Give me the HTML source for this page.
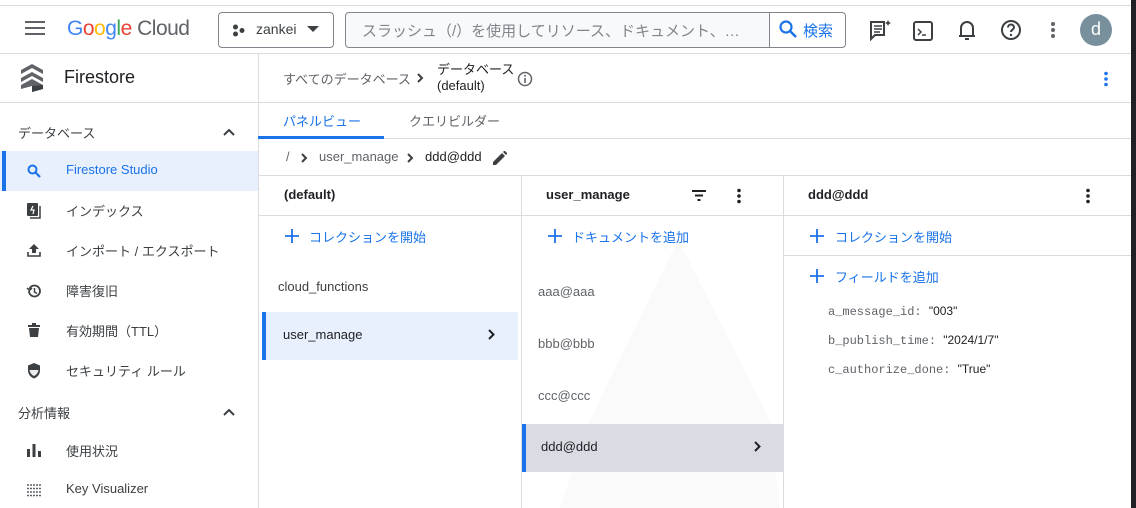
<!DOCTYPE html><html><head><meta charset="utf-8"><style>
*{box-sizing:border-box;margin:0;padding:0}
body{width:1136px;height:508px;overflow:hidden;background:#fff;font-family:"Liberation Sans","Noto Sans CJK JP",sans-serif;color:#202124;position:relative;font-size:13px}
.a{position:absolute;white-space:nowrap}
.h{background:#dadce0}
.g{color:#5f6368}
.b{color:#1a73e8}
svg{position:absolute}
</style></head><body>
<div class="a h" style="left:0;top:5px;width:1136px;height:1px"></div>
<div class="a h" style="left:0;top:53px;width:1136px;height:1px"></div>
<svg style="left:25px;top:21px" width="20" height="14"><path d="M0 1h20M0 7h20M0 13h20" stroke="#5f6368" stroke-width="2"/></svg>
<div class="a" style="left:67px;top:17px;font-size:21px;letter-spacing:-0.5px"><span style="color:#4285f4">G</span><span style="color:#ea4335">o</span><span style="color:#fbbc04">o</span><span style="color:#4285f4">g</span><span style="color:#34a853">l</span><span style="color:#ea4335">e</span> <span style="color:#5f6368">Cloud</span></div>
<div class="a" style="left:218px;top:12px;width:116px;height:36px;border:1px solid #80868b;border-radius:4px"></div>
<svg style="left:232px;top:24px" width="14" height="13"><circle cx="3.5" cy="3" r="2.5" fill="#3c4043"/><circle cx="3.5" cy="10" r="2.5" fill="#3c4043"/><circle cx="10" cy="6.5" r="2.5" fill="#3c4043"/></svg>
<div class="a" style="left:256px;top:21px;font-size:14px;color:#3c4043">zankei</div>
<svg style="left:307px;top:26px" width="12" height="7"><path d="M0 0h12L6 6z" fill="#3c4043"/></svg>
<div class="a" style="left:345px;top:12px;width:501px;height:36px;border:1px solid #80868b;border-radius:4px;background:#f8f9fa"></div>
<div class="a" style="left:769px;top:13px;width:76px;height:34px;background:#fff;border-left:1px solid #80868b;border-radius:0 4px 4px 0"></div>
<div class="a" style="left:362px;top:20px;font-size:15px;color:#80868b">スラッシュ（/）を使用してリソース、ドキュメント、…</div>
<svg style="left:779px;top:20px" width="18" height="18"><circle cx="7" cy="7" r="5.5" fill="none" stroke="#1a73e8" stroke-width="2.2"/><path d="M11 11l6 6" stroke="#1a73e8" stroke-width="2.5"/></svg>
<div class="a b" style="left:803px;top:20px;font-size:15px">検索</div>
<svg style="left:868px;top:18px" width="24" height="24"><path d="M3 4h13v13H7l-4 4z" fill="none" stroke="#3c4043" stroke-width="2"/><path d="M6 8h8M6 11h8M6 14h6" stroke="#3c4043" stroke-width="1.6"/><path d="M20 2l1 2 2 1-2 1-1 2-1-2-2-1 2-1z" fill="#3c4043"/></svg>
<svg style="left:913px;top:21px" width="20" height="20"><rect x="1" y="1" width="18" height="18" rx="2" fill="none" stroke="#3c4043" stroke-width="2"/><path d="M5 8l3 3-3 3M9 14h4" stroke="#3c4043" stroke-width="1.5" fill="none"/></svg>
<svg style="left:957px;top:18px" width="20" height="24"><path d="M4 18V10a6 6 0 0112 0v8M2 18h16" fill="none" stroke="#3c4043" stroke-width="2"/><path d="M8 21h4" stroke="#3c4043" stroke-width="2"/><path d="M10 3v2" stroke="#3c4043" stroke-width="2"/></svg>
<svg style="left:1000px;top:19px" width="22" height="22"><circle cx="11" cy="11" r="9" fill="none" stroke="#3c4043" stroke-width="2"/><path d="M8 8.5a3 3 0 116 0c0 2-3 2.2-3 4.5" fill="none" stroke="#3c4043" stroke-width="2"/><circle cx="11" cy="16" r="1.2" fill="#3c4043"/></svg>
<svg style="left:1050px;top:21px" width="6" height="18"><circle cx="3" cy="3" r="2" fill="#5f6368"/><circle cx="3" cy="9" r="2" fill="#5f6368"/><circle cx="3" cy="15" r="2" fill="#5f6368"/></svg>
<div class="a" style="left:1080px;top:14px;width:32px;height:32px;border-radius:50%;background:#78909c;color:#fff;font-size:18px;text-align:center;line-height:31px">d</div>
<div class="a" style="left:1131px;top:0;width:5px;height:508px;background:#202124"></div>

<div class="a h" style="left:258px;top:53px;width:1px;height:455px"></div>
<div class="a h" style="left:0;top:102px;width:258px;height:1px"></div>
<svg style="left:19px;top:63px" width="26" height="30"><path d="M2 7L13 1l11 6v4L13 5 2 11z" fill="#5f6368"/><path d="M2 15L13 9l11 6v4L13 13 2 19z" fill="#5f6368"/><path d="M2 22L13 16l11 6v4l-11 3v-6l-11 3z" fill="#5f6368"/><path d="M13 23l11-1v4l-11 3z" fill="#3c4043"/></svg>
<div class="a" style="left:64px;top:67px;font-size:18px">Firestore</div>
<div class="a" style="left:18px;top:123px;font-size:13px;color:#3c4043">データベース</div>
<svg style="left:223px;top:128px" width="12" height="8"><path d="M1 7l5-5 5 5" fill="none" stroke="#3c4043" stroke-width="2"/></svg>
<div class="a" style="left:0;top:151px;width:258px;height:40px;background:#e8f0fe"></div>
<div class="a" style="left:2px;top:151px;width:4px;height:40px;background:#1a73e8"></div>
<svg style="left:27px;top:164px" width="14" height="14"><circle cx="5.5" cy="5.5" r="4" fill="none" stroke="#1a73e8" stroke-width="2"/><path d="M8.5 8.5l4.5 4.5" stroke="#1a73e8" stroke-width="2.2"/></svg>
<div class="a b" style="left:66px;top:162px;font-size:13px">Firestore Studio</div>
<div class="a" style="left:66px;top:201px;font-size:13px;color:#3c4043">インデックス</div>
<svg style="left:27px;top:203px" width="14" height="16"><rect x="0" y="0" width="11" height="13" rx="1" fill="#3c4043"/><path d="M3 15h10V3" fill="none" stroke="#3c4043" stroke-width="1.5"/><path d="M6 3l-2 4h3l-1 4" stroke="#fff" stroke-width="1.2" fill="none"/></svg>
<div class="a" style="left:66px;top:241px;font-size:13px;color:#3c4043">インポート / エクスポート</div>
<svg style="left:27px;top:243px" width="14" height="14"><path d="M7 1L2 6h3v4h4V6h3z" fill="#3c4043"/><path d="M1 9v4h12V9" fill="none" stroke="#3c4043" stroke-width="1.6"/></svg>
<div class="a" style="left:66px;top:281px;font-size:13px;color:#3c4043">障害復旧</div>
<svg style="left:26px;top:283px" width="16" height="16"><path d="M3 8a5.5 5.5 0 105.5-5.5A5.5 5.5 0 003.4 6" fill="none" stroke="#3c4043" stroke-width="1.8"/><path d="M1 5l2.5 2.5L6 5" fill="none" stroke="#3c4043" stroke-width="1.5"/><path d="M8.5 5v4l2.5 1.5" fill="none" stroke="#3c4043" stroke-width="1.5"/></svg>
<div class="a" style="left:66px;top:321px;font-size:13px;color:#3c4043">有効期間（TTL）</div>
<svg style="left:28px;top:323px" width="12" height="14"><path d="M0 2h12v2H0zM4 0h4v2H4zM1 5h10l-1 9H2z" fill="#3c4043"/></svg>
<div class="a" style="left:66px;top:361px;font-size:13px;color:#3c4043">セキュリティ ルール</div>
<svg style="left:27px;top:363px" width="14" height="16"><path d="M7 0l6 2.5v5c0 4-3 7-6 8-3-1-6-4-6-8v-5z" fill="#3c4043"/><path d="M7 2v11c2-1 4-3 4.5-6L7 7H2.5C3 10 5 12 7 13" fill="#fff" opacity=".9"/></svg>
<div class="a" style="left:18px;top:403px;font-size:13px;color:#3c4043">分析情報</div>
<svg style="left:223px;top:408px" width="12" height="8"><path d="M1 7l5-5 5 5" fill="none" stroke="#3c4043" stroke-width="2"/></svg>
<div class="a" style="left:66px;top:441px;font-size:13px;color:#3c4043">使用状況</div>
<svg style="left:27px;top:444px" width="14" height="13"><path d="M0 5h3v8H0zM5.5 0h3v13h-3zM11 7h3v6h-3z" fill="#3c4043"/></svg>
<div class="a" style="left:66px;top:481px;font-size:13px;color:#3c4043">Key Visualizer</div>
<svg style="left:27px;top:484px" width="14" height="14"><path d="M0 1h14M0 4.5h14M0 8h14M0 11.5h14" stroke="#5f6368" stroke-width="1.5" stroke-dasharray="2 1"/></svg>

<div class="a g" style="left:283px;top:69px;font-size:13px">すべてのデータベース</div>
<svg style="left:417px;top:73px" width="8" height="10"><path d="M1 1l4 4-4 4" fill="none" stroke="#3c4043" stroke-width="2"/></svg>
<div class="a" style="left:437px;top:62px;font-size:13px;line-height:16px">データベース<br>(default)</div>
<svg style="left:517px;top:71px" width="16" height="16"><circle cx="8" cy="8" r="6.5" fill="none" stroke="#5f6368" stroke-width="1.5"/><path d="M8 7v5" stroke="#5f6368" stroke-width="1.6"/><circle cx="8" cy="4.8" r="1" fill="#5f6368"/></svg>
<svg style="left:1103px;top:71px" width="6" height="16"><circle cx="3" cy="2.5" r="1.8" fill="#1a73e8"/><circle cx="3" cy="8" r="1.8" fill="#1a73e8"/><circle cx="3" cy="13.5" r="1.8" fill="#1a73e8"/></svg>
<div class="a h" style="left:258px;top:102px;width:873px;height:1px"></div>
<div class="a b" style="left:283px;top:111px;font-size:13px">パネルビュー</div>
<div class="a g" style="left:409px;top:111px;font-size:13px">クエリビルダー</div>
<div class="a h" style="left:258px;top:138px;width:873px;height:1px"></div>
<div class="a" style="left:258px;top:136px;width:126px;height:3px;background:#1a73e8"></div>
<div class="a g" style="left:286px;top:149px;font-size:13px">/</div>
<svg style="left:301px;top:153px" width="8" height="10"><path d="M1 1l4 4-4 4" fill="none" stroke="#3c4043" stroke-width="2"/></svg>
<div class="a g" style="left:319px;top:149px;font-size:13px">user_manage</div>
<svg style="left:407px;top:153px" width="8" height="10"><path d="M1 1l4 4-4 4" fill="none" stroke="#3c4043" stroke-width="2"/></svg>
<div class="a" style="left:425px;top:149px;font-size:13px">ddd@ddd</div>
<svg style="left:493px;top:151px" width="14" height="14"><path d="M0 14v-3L9 2l3 3-9 9z M10 1l1.5-1.5 3 3L13 4z" fill="#3c4043"/></svg>
<div class="a h" style="left:258px;top:175px;width:873px;height:1px"></div>
<div class="a h" style="left:521px;top:175px;width:1px;height:333px"></div>
<div class="a h" style="left:783px;top:175px;width:1px;height:333px"></div>
<div class="a h" style="left:258px;top:215px;width:873px;height:1px"></div>
<div class="a" style="left:284px;top:187px;font-size:13px;font-weight:bold">(default)</div>
<div class="a" style="left:546px;top:187px;font-size:13px;font-weight:bold">user_manage</div>
<svg style="left:692px;top:190px" width="14" height="11"><path d="M0 1h14M3 5.5h8M5.5 10h3" stroke="#202124" stroke-width="2"/></svg>
<svg style="left:736px;top:188px" width="6" height="16"><circle cx="3" cy="2.5" r="1.8" fill="#202124"/><circle cx="3" cy="8" r="1.8" fill="#202124"/><circle cx="3" cy="13.5" r="1.8" fill="#202124"/></svg>
<div class="a" style="left:808px;top:187px;font-size:13px;font-weight:bold">ddd@ddd</div>
<svg style="left:1085px;top:188px" width="6" height="16"><circle cx="3" cy="2.5" r="1.8" fill="#202124"/><circle cx="3" cy="8" r="1.8" fill="#202124"/><circle cx="3" cy="13.5" r="1.8" fill="#202124"/></svg>
<svg style="left:285px;top:229px" width="14" height="14"><path d="M7 0v14M0 7h14" stroke="#1a73e8" stroke-width="1.8"/></svg>
<div class="a b" style="left:309px;top:227px;font-size:13px">コレクションを開始</div>
<div class="a" style="left:278px;top:279px;font-size:13px;color:#3c4043">cloud_functions</div>
<div class="a" style="left:262px;top:312px;width:256px;height:48px;background:#e8f0fe"></div>
<div class="a" style="left:262px;top:312px;width:4px;height:48px;background:#1a73e8"></div>
<div class="a" style="left:283px;top:327px;font-size:13px">user_manage</div>
<svg style="left:488px;top:329px" width="8" height="11"><path d="M1 1l4.5 4.5L1 10" fill="none" stroke="#202124" stroke-width="2"/></svg>
<svg style="left:530px;top:240px" width="250" height="268"><path d="M148 0L240 180L250 268H30L60 180z" fill="#fafafa"/></svg>
<svg style="left:548px;top:229px" width="14" height="14"><path d="M7 0v14M0 7h14" stroke="#1a73e8" stroke-width="1.8"/></svg>
<div class="a b" style="left:572px;top:227px;font-size:13px">ドキュメントを追加</div>
<div class="a g" style="left:538px;top:284px;font-size:13px">aaa@aaa</div>
<div class="a g" style="left:538px;top:336px;font-size:13px">bbb@bbb</div>
<div class="a g" style="left:538px;top:388px;font-size:13px">ccc@ccc</div>
<div class="a" style="left:522px;top:424px;width:261px;height:48px;background:#d9dce3"></div>
<div class="a" style="left:522px;top:424px;width:4px;height:48px;background:#1a73e8"></div>
<div class="a" style="left:541px;top:439px;font-size:13px">ddd@ddd</div>
<svg style="left:754px;top:441px" width="8" height="11"><path d="M1 1l4.5 4.5L1 10" fill="none" stroke="#202124" stroke-width="2"/></svg>
<svg style="left:810px;top:229px" width="14" height="14"><path d="M7 0v14M0 7h14" stroke="#1a73e8" stroke-width="1.8"/></svg>
<div class="a b" style="left:835px;top:227px;font-size:13px">コレクションを開始</div>
<div class="a h" style="left:784px;top:255px;width:347px;height:1px"></div>
<svg style="left:810px;top:269px" width="14" height="14"><path d="M7 0v14M0 7h14" stroke="#1a73e8" stroke-width="1.8"/></svg>
<div class="a b" style="left:835px;top:267px;font-size:13px">フィールドを追加</div>
<div class="a" style="left:828px;top:304px;font-size:12px;font-family:'Liberation Mono',monospace;color:#5f6368">a_message_id: <span style="color:#202124;font-family:'Liberation Sans',sans-serif">"003"</span></div>
<div class="a" style="left:828px;top:333px;font-size:12px;font-family:'Liberation Mono',monospace;color:#5f6368">b_publish_time: <span style="color:#202124;font-family:'Liberation Sans',sans-serif">"2024/1/7"</span></div>
<div class="a" style="left:828px;top:362px;font-size:12px;font-family:'Liberation Mono',monospace;color:#5f6368">c_authorize_done: <span style="color:#202124;font-family:'Liberation Sans',sans-serif">"True"</span></div>
</body></html>
